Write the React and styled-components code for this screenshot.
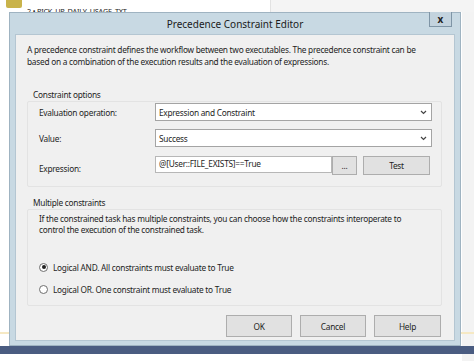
import React from 'react'
import styled, { createGlobalStyle } from 'styled-components'

const Global = createGlobalStyle`
  html, body { margin: 0; padding: 0; }
  body {
    width: 474px;
    height: 361px;
    overflow: hidden;
    background: #ffffff;
    font-family: "Noto Sans", "Open Sans", sans-serif;
  }
`

const Desktop = styled.div`
  position: relative;
  width: 474px;
  height: 361px;
  overflow: hidden;
  display: flex;
  flex-direction: column;
  background: #ffffff;
`

const TreeRow = styled.div`
  height: 12px;
  display: flex;
  overflow: hidden;
`

const TreeItem = styled.div`
  width: 264px;
  display: flex;
  align-items: flex-end;
  gap: 5px;
  padding-left: 6px;
  border-right: 1px solid #e2e2e2;
  font-size: 7.3px;
  letter-spacing: -0.2px;
  color: #222;
  span { margin-bottom: -4px; }
`

const TreeIcon = styled.div`
  width: 16px;
  height: 8px;
  background: #c9b34a;
  border-radius: 0 0 2px 2px;
  align-self: flex-start;
`

const TreeFill = styled.div`
  flex: 1;
  background: #f4f4f4;
`

const AppBody = styled.div`
  flex: 1;
  display: flex;
  flex-direction: column;
  background: linear-gradient(to right, #ffffff 0 462px, #f3f3f3 462px);
`

const AppSpacer = styled.div`
  flex: 1;
`

const AccentLine = styled.div`
  height: 2px;
  background: #f6e9c4;
  margin-bottom: 12px;
`

const TaskBar = styled.div`
  height: 8px;
  background: #4a5c81;
  margin-bottom: 7px;
`

const Window = styled.div`
  position: absolute;
  left: 9px;
  top: 12px;
  width: 452px;
  height: 334px;
  box-sizing: border-box;
  background: #c8d9e3;
  border: 1px solid #9fb3c1;
  display: flex;
  flex-direction: column;
  padding: 0 5px 4px 5px;
`

const TitleBar = styled.div`
  position: relative;
  height: 21px;
  flex-shrink: 0;
  display: flex;
  align-items: center;
  justify-content: center;
  font-size: 10px;
  color: #1b1b1b;
`

const CloseButton = styled.div`
  position: absolute;
  right: 3px;
  top: -1px;
  width: 23px;
  height: 15px;
  box-sizing: border-box;
  border: 1px solid #7f95a6;
  border-top: none;
  background: #c3d3de;
  display: flex;
  align-items: center;
  justify-content: center;
  font-size: 10px;
  font-weight: 700;
  color: #222;
`

const Client = styled.div`
  flex: 1;
  min-height: 0;
  background: #f0f0f0;
  border: 1px solid #b4c6d2;
  display: flex;
  flex-direction: column;
  padding: 9px 12px 0 11px;
  font-size: 8.3px;
  letter-spacing: -0.25px;
  color: #1e1e1e;
`

const Intro = styled.p`
  margin: 0 0 21px 0;
  line-height: 12px;
`

const Group = styled.div`
  display: flex;
  flex-direction: column;
  margin-bottom: ${p => p.$gap || 0}px;
`

const GroupLabel = styled.div`
  padding-left: 6px;
  line-height: 12px;
  height: 12px;
`

const GroupBox = styled.div`
  border: 1px solid #e3e3e3;
  border-radius: 2px;
  display: flex;
  flex-direction: column;
  padding: ${p => p.$pad};
`

const FormRow = styled.div`
  display: grid;
  grid-template-columns: 116px 1fr;
  align-items: center;
  margin-bottom: ${p => p.$gap || 0}px;
`

const FieldLabel = styled.div`
  padding-top: ${p => p.$drop || 0}px;
`

const Select = styled.div`
  height: 18px;
  box-sizing: border-box;
  background: #fff;
  border: 1px solid #a4a4a4;
  display: flex;
  align-items: center;
  justify-content: space-between;
  padding: 0 4px 0 3px;
  margin-right: 9px;
`

const Chevron = styled.svg`
  width: 7px;
  height: 5px;
`

const ExprLine = styled.div`
  display: flex;
  align-items: flex-start;
`

const TextInput = styled.div`
  width: 177px;
  height: 17px;
  box-sizing: border-box;
  background: #fff;
  border: 1px solid #b7b7b7;
  padding: 0 3px;
  line-height: 14px;
`

const Button = styled.div`
  width: ${p => p.$w}px;
  height: ${p => p.$h || 18}px;
  box-sizing: border-box;
  margin-left: ${p => p.$ml || 0}px;
  background: #e1e1e1;
  border: 1px solid #adadad;
  display: flex;
  align-items: center;
  justify-content: center;
  color: #1e1e1e;
`

const Note = styled.p`
  margin: 0;
  line-height: 11px;
`

const RadioRow = styled.div`
  display: flex;
  align-items: center;
  gap: 5px;
  height: 12px;
  margin-top: ${p => p.$mt}px;
`

const RadioCircle = styled.div`
  width: 9px;
  height: 9px;
  box-sizing: border-box;
  border-radius: 50%;
  border: 1px solid #6f6f6f;
  background: #fff;
  display: flex;
  align-items: center;
  justify-content: center;
  &::after {
    content: '';
    width: 4px;
    height: 4px;
    border-radius: 50%;
    background: ${p => (p.$on ? '#222' : 'transparent')};
  }
`

const Footer = styled.div`
  display: flex;
  justify-content: flex-end;
  gap: 8px;
  margin-top: 9px;
  padding-right: 1px;
`

export default function App() {
  return (
    <>
      <Global />
      <Desktop>
        <TreeRow>
          <TreeItem>
            <TreeIcon />
            <span>2 • PICK_UP_DAILY_USAGE_TXT</span>
          </TreeItem>
          <TreeFill />
        </TreeRow>
        <AppBody>
          <AppSpacer />
          <AccentLine />
          <TaskBar />
        </AppBody>

        <Window>
          <TitleBar>
            Precedence Constraint Editor
            <CloseButton>x</CloseButton>
          </TitleBar>
          <Client>
            <Intro>
              A precedence constraint defines the workflow between two executables. The precedence constraint can be
              <br />
              based on a combination of the execution results and the evaluation of expressions.
            </Intro>

            <Group $gap={10}>
              <GroupLabel>Constraint options</GroupLabel>
              <GroupBox $pad="1px 0 11px 11px">
                <FormRow $gap={8}>
                  <FieldLabel>Evaluation operation:</FieldLabel>
                  <Select>
                    <span>Expression and Constraint</span>
                    <Chevron viewBox="0 0 7 5">
                      <path d="M1 1l2.5 2.5L6 1" fill="none" stroke="#444" strokeWidth="1.2" />
                    </Chevron>
                  </Select>
                </FormRow>
                <FormRow $gap={9}>
                  <FieldLabel>Value:</FieldLabel>
                  <Select>
                    <span>Success</span>
                    <Chevron viewBox="0 0 7 5">
                      <path d="M1 1l2.5 2.5L6 1" fill="none" stroke="#444" strokeWidth="1.2" />
                    </Chevron>
                  </Select>
                </FormRow>
                <FormRow>
                  <FieldLabel $drop={6}>Expression:</FieldLabel>
                  <ExprLine>
                    <TextInput>@[User::FILE_EXISTS]==True</TextInput>
                    <Button $w={25} $h={19}>...</Button>
                    <Button $w={67} $h={19} $ml={6}>Test</Button>
                  </ExprLine>
                </FormRow>
              </GroupBox>
            </Group>

            <Group>
              <GroupLabel>Multiple constraints</GroupLabel>
              <GroupBox $pad="3px 0 10px 11px">
                <Note>
                  If the constrained task has multiple constraints, you can choose how the constraints interoperate to
                  <br />
                  control the execution of the constrained task.
                </Note>
                <RadioRow $mt={26}>
                  <RadioCircle $on />
                  <span>Logical AND. All constraints must evaluate to True</span>
                </RadioRow>
                <RadioRow $mt={10}>
                  <RadioCircle />
                  <span>Logical OR. One constraint must evaluate to True</span>
                </RadioRow>
              </GroupBox>
            </Group>

            <Footer>
              <Button $w={66} $h={22}>OK</Button>
              <Button $w={66} $h={22}>Cancel</Button>
              <Button $w={67} $h={22}>Help</Button>
            </Footer>
          </Client>
        </Window>
      </Desktop>
    </>
  )
}
